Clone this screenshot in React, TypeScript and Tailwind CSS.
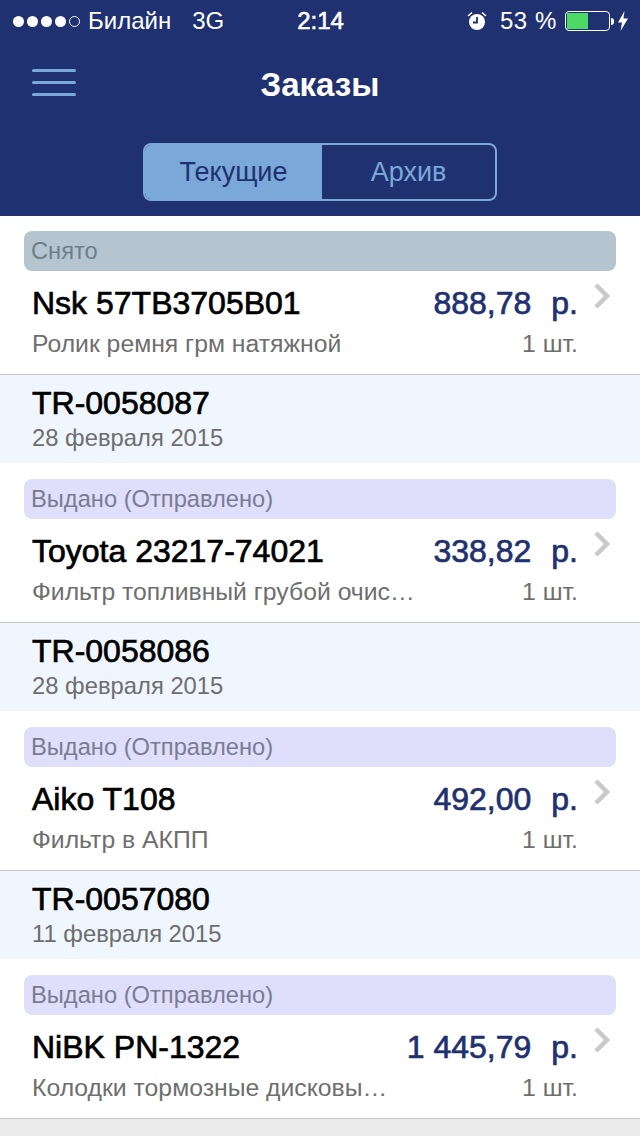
const font = { fontFamily: '"Liberation Sans", Arial, sans-serif' };

type Order = {
  status: string;
  tone: string;
  name: string;
  price: string;
  desc: string;
  number?: string;
  date?: string;
};

const orders: Order[] = [
  {
    status: "Снято",
    tone: "bg-[#b5c5d0] text-[#6f7f8a]",
    name: "Nsk 57TB3705B01",
    price: "888,78",
    desc: "Ролик ремня грм натяжной",
    number: "TR-0058087",
    date: "28 февраля 2015",
  },
  {
    status: "Выдано (Отправлено)",
    tone: "bg-[#dfdffb] text-[#7a7c93]",
    name: "Toyota 23217-74021",
    price: "338,82",
    desc: "Фильтр топливный грубой очис…",
    number: "TR-0058086",
    date: "28 февраля 2015",
  },
  {
    status: "Выдано (Отправлено)",
    tone: "bg-[#dfdffb] text-[#7a7c93]",
    name: "Aiko T108",
    price: "492,00",
    desc: "Фильтр в АКПП",
    number: "TR-0057080",
    date: "11 февраля 2015",
  },
  {
    status: "Выдано (Отправлено)",
    tone: "bg-[#dfdffb] text-[#7a7c93]",
    name: "NiBK PN-1322",
    price: "1 445,79",
    desc: "Колодки тормозные дисковы…",
  },
];

const StatusBar = () => (
  <div className="flex h-10 items-center justify-between pl-[13px] pr-[12px] pt-[2px] text-[24px] leading-none text-white">
    <div className="flex w-[240px] items-center">
      <div className="flex items-center gap-[3px]">
        {[0, 1, 2, 3].map((i) => (
          <span key={i} className="h-[11px] w-[11px] rounded-full bg-white" />
        ))}
        <span className="h-[11px] w-[11px] rounded-full border border-white" />
      </div>
      <span className="ml-[8px]">Билайн</span>
      <span className="ml-[21px]">3G</span>
    </div>
    <span className="[-webkit-text-stroke:0.6px_white]">2:14</span>
    <div className="flex w-[240px] items-center justify-end">
      <svg width="20" height="20" viewBox="0 0 20 20" className="mr-[13px]">
        <circle cx="10" cy="11" r="8" fill="#fff" />
        <path d="M10 6v5.5H6" stroke="#1f3170" strokeWidth="1.8" fill="none" />
        <path d="M1 5 5 1.5M19 5l-4-3.5" stroke="#fff" strokeWidth="1.6" />
      </svg>
      <span className="tracking-[0.6px]">53 %</span>
      <div className="ml-[8px] flex h-[20px] w-[45px] items-center rounded-[4px] border border-white p-[1px]">
        <div className="h-full w-[21px] bg-[#4cd964]" />
      </div>
      <div className="ml-[1px] h-[7px] w-[3px] rounded-r-full bg-white" />
      <svg width="10" height="20" viewBox="0 0 10 20" className="ml-[4px]">
        <path d="M6.5 0 0 11.5h4L2.5 20 10 7.5H5.5z" fill="#fff" />
      </svg>
    </div>
  </div>
);

const Header = () => (
  <div className="bg-[#1f3170] pb-[15px]">
    <StatusBar />
    <div className="relative flex h-[103px] justify-center pt-[26px]">
      <div className="absolute left-[32px] top-[29px] flex w-[44px] flex-col gap-[9px]">
        <span className="h-[3px] rounded-full bg-[#7aa8d8]" />
        <span className="h-[3px] rounded-full bg-[#7aa8d8]" />
        <span className="h-[3px] rounded-full bg-[#7aa8d8]" />
      </div>
      <h1 className="text-[33px] font-bold leading-[38px] text-white">Заказы</h1>
    </div>
    <div className="flex justify-center text-[27px] leading-none">
      <div className="flex h-[58px] w-[354px] overflow-hidden rounded-[8px] border-2 border-[#7aa8d8]">
        <div className="flex w-[177px] items-center justify-center bg-[#7aa8d8] text-[#1f3170]">Текущие</div>
        <div className="flex flex-1 items-center justify-center text-[#7aa8d8]">Архив</div>
      </div>
    </div>
  </div>
);

const OrderRow = ({ order }: { order: Order }) => (
  <div className="group">
    <div className="bg-white pt-[16px] group-first:pt-[15px]">
      <div className={`mx-[24px] flex h-[40px] items-center rounded-[8px] pl-[7px] pt-[1px] text-[23.7px] leading-none ${order.tone}`}>
        {order.status}
      </div>
      <div className="relative h-[104px] border-b border-[#c8c8c8] pl-[32px] pr-[62px]">
        <div className="flex items-center justify-between pt-[14px] text-[32px] leading-[36px]">
          <span className="text-black [-webkit-text-stroke:0.7px_black]">{order.name}</span>
          <span className="text-[#1f3170] [-webkit-text-stroke:0.7px_#1f3170]">
            {order.price}
            <span className="ml-[20px]">р.</span>
          </span>
        </div>
        <div className="flex items-center justify-between pt-[9px] text-[24.75px] leading-[28px] text-[#6e6e6e]">
          <span>{order.desc}</span>
          <span>1 шт.</span>
        </div>
        <svg width="18" height="26" viewBox="0 0 18 26" className="absolute right-[29px] top-[12px]">
          <path d="M3 2l11 11L3 24" fill="none" stroke="#c8c8cd" strokeWidth="4.5" />
        </svg>
      </div>
    </div>
    {order.number && (
      <div className="h-[88px] bg-[#eff6fe] pl-[32px] pt-[10px]">
        <div className="text-[32px] leading-[36px] text-black [-webkit-text-stroke:0.7px_black]">{order.number}</div>
        <div className="pt-[3px] text-[23.8px] leading-[28px] text-[#6e6e6e]">{order.date}</div>
      </div>
    )}
  </div>
);

export default function App() {
  return (
    <div className="flex h-[1136px] w-[640px] flex-col overflow-hidden bg-[#ebebeb]" style={font}>
      <Header />
      <div>
        {orders.map((order) => (
          <OrderRow key={order.name} order={order} />
        ))}
      </div>
    </div>
  );
}
